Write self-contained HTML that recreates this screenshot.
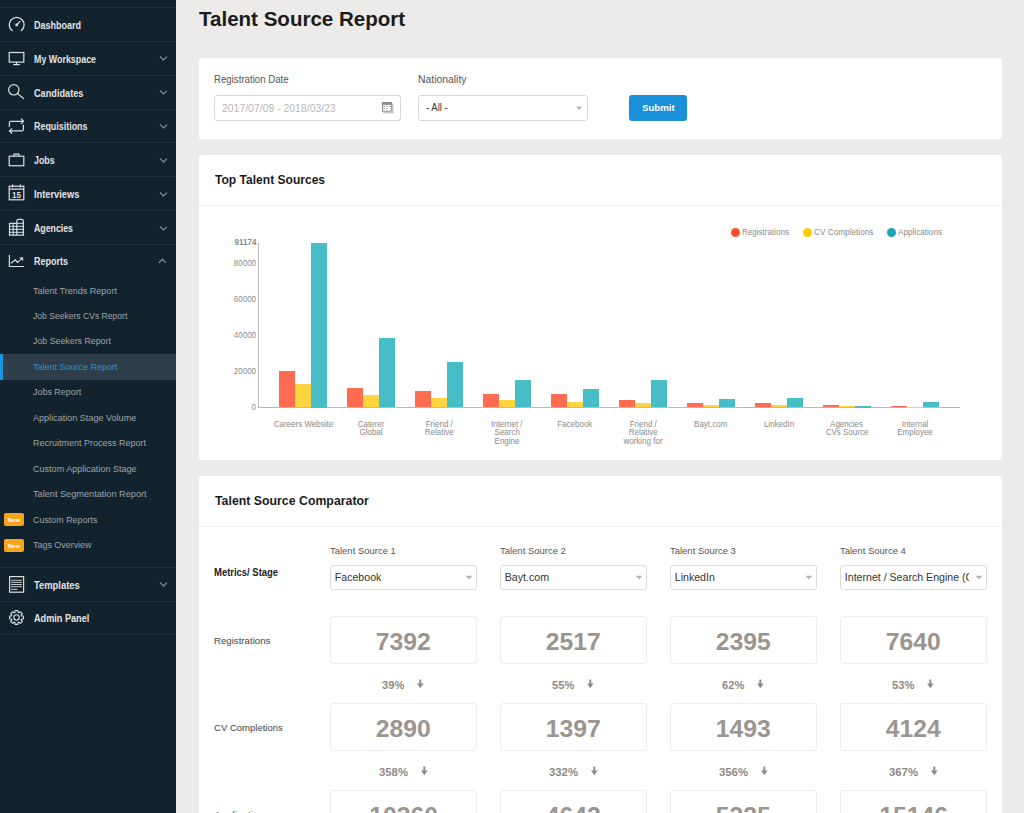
<!DOCTYPE html>
<html><head><meta charset="utf-8"><title>Talent Source Report</title>
<style>
html,body{margin:0;padding:0;}
body{width:1024px;height:813px;overflow:hidden;position:relative;background:#ecebe9;font-family:"Liberation Sans",sans-serif;}
.t{position:absolute;white-space:nowrap;}
.r{position:absolute;}
svg.r{overflow:visible}
</style></head><body>
<div class="r" style="left:0px;top:0px;width:176px;height:813px;background:#12232e"></div>
<div class="r" style="left:0px;top:7px;width:176px;height:1px;background:#21303a"></div>
<div class="r" style="left:0px;top:41px;width:176px;height:1px;background:#21303a"></div>
<div class="r" style="left:0px;top:75px;width:176px;height:1px;background:#21303a"></div>
<div class="r" style="left:0px;top:109px;width:176px;height:1px;background:#21303a"></div>
<div class="r" style="left:0px;top:142px;width:176px;height:1px;background:#21303a"></div>
<div class="r" style="left:0px;top:176px;width:176px;height:1px;background:#21303a"></div>
<div class="r" style="left:0px;top:210px;width:176px;height:1px;background:#21303a"></div>
<div class="r" style="left:0px;top:244px;width:176px;height:1px;background:#21303a"></div>
<div class="r" style="left:0px;top:567px;width:176px;height:1px;background:#21303a"></div>
<div class="r" style="left:0px;top:601px;width:176px;height:1px;background:#21303a"></div>
<div class="r" style="left:0px;top:634px;width:176px;height:1px;background:#21303a"></div>
<div class="t" style="left:33.70px;top:18.79px;font-size:10px;line-height:13px;color:#e2e4e5;font-weight:700;transform:scaleX(0.900);transform-origin:0 0;">Dashboard</div>
<div class="t" style="left:33.70px;top:52.69px;font-size:10px;line-height:13px;color:#e2e4e5;font-weight:700;transform:scaleX(0.888);transform-origin:0 0;">My Workspace</div>
<svg class="r" style="left:159px;top:55.1px" width="9" height="6" viewBox="0 0 9 6"><path d="M0.9 1.3 L4.5 4.9 L7.9 1.6" fill="none" stroke="#8b949b" stroke-width="1.15"/></svg>
<div class="t" style="left:33.70px;top:86.58px;font-size:10px;line-height:13px;color:#e2e4e5;font-weight:700;transform:scaleX(0.917);transform-origin:0 0;">Candidates</div>
<svg class="r" style="left:159px;top:89.0px" width="9" height="6" viewBox="0 0 9 6"><path d="M0.9 1.3 L4.5 4.9 L7.9 1.6" fill="none" stroke="#8b949b" stroke-width="1.15"/></svg>
<div class="t" style="left:33.70px;top:120.48px;font-size:10px;line-height:13px;color:#e2e4e5;font-weight:700;transform:scaleX(0.892);transform-origin:0 0;">Requisitions</div>
<svg class="r" style="left:159px;top:123.0px" width="9" height="6" viewBox="0 0 9 6"><path d="M0.9 1.3 L4.5 4.9 L7.9 1.6" fill="none" stroke="#8b949b" stroke-width="1.15"/></svg>
<div class="t" style="left:33.70px;top:154.39px;font-size:10px;line-height:13px;color:#e2e4e5;font-weight:700;transform:scaleX(0.887);transform-origin:0 0;">Jobs</div>
<svg class="r" style="left:159px;top:156.9px" width="9" height="6" viewBox="0 0 9 6"><path d="M0.9 1.3 L4.5 4.9 L7.9 1.6" fill="none" stroke="#8b949b" stroke-width="1.15"/></svg>
<div class="t" style="left:33.70px;top:188.28px;font-size:10px;line-height:13px;color:#e2e4e5;font-weight:700;transform:scaleX(0.926);transform-origin:0 0;">Interviews</div>
<svg class="r" style="left:159px;top:190.8px" width="9" height="6" viewBox="0 0 9 6"><path d="M0.9 1.3 L4.5 4.9 L7.9 1.6" fill="none" stroke="#8b949b" stroke-width="1.15"/></svg>
<div class="t" style="left:33.70px;top:222.03px;font-size:10px;line-height:13px;color:#e2e4e5;font-weight:700;transform:scaleX(0.877);transform-origin:0 0;">Agencies</div>
<svg class="r" style="left:159px;top:224.5px" width="9" height="6" viewBox="0 0 9 6"><path d="M0.9 1.3 L4.5 4.9 L7.9 1.6" fill="none" stroke="#8b949b" stroke-width="1.15"/></svg>
<div class="t" style="left:33.70px;top:255.39px;font-size:10px;line-height:13px;color:#e2e4e5;font-weight:700;transform:scaleX(0.897);transform-origin:0 0;">Reports</div>
<svg class="r" style="left:158px;top:257.9px" width="9" height="6" viewBox="0 0 9 6"><path d="M0.9 4.9 L4.4 1.4 L7.7 4.7" fill="none" stroke="#8f989e" stroke-width="1.15"/></svg>
<div class="t" style="left:33.70px;top:578.74px;font-size:10px;line-height:13px;color:#e2e4e5;font-weight:700;transform:scaleX(0.938);transform-origin:0 0;">Templates</div>
<svg class="r" style="left:159px;top:581.2px" width="9" height="6" viewBox="0 0 9 6"><path d="M0.9 1.3 L4.5 4.9 L7.9 1.6" fill="none" stroke="#8b949b" stroke-width="1.15"/></svg>
<div class="t" style="left:33.70px;top:612.28px;font-size:10px;line-height:13px;color:#e2e4e5;font-weight:700;transform:scaleX(0.913);transform-origin:0 0;">Admin Panel</div>
<div class="r" style="left:0px;top:354px;width:176px;height:26px;background:#2d3d4a"></div>
<div class="r" style="left:0px;top:354px;width:3px;height:26px;background:#1a96e0"></div>
<div class="t" style="left:33.40px;top:283.54px;font-size:9.7px;line-height:13px;color:#9ea3a6;font-weight:400;transform:scaleX(0.933);transform-origin:0 0;">Talent Trends Report</div>
<div class="t" style="left:33.40px;top:308.99px;font-size:9.7px;line-height:13px;color:#9ea3a6;font-weight:400;transform:scaleX(0.885);transform-origin:0 0;">Job Seekers CVs Report</div>
<div class="t" style="left:33.40px;top:334.44px;font-size:9.7px;line-height:13px;color:#9ea3a6;font-weight:400;transform:scaleX(0.910);transform-origin:0 0;">Job Seekers Report</div>
<div class="t" style="left:33.40px;top:359.89px;font-size:9.7px;line-height:13px;color:#2594d6;font-weight:400;transform:scaleX(0.928);transform-origin:0 0;">Talent Source Report</div>
<div class="t" style="left:33.40px;top:385.34px;font-size:9.7px;line-height:13px;color:#9ea3a6;font-weight:400;transform:scaleX(0.922);transform-origin:0 0;">Jobs Report</div>
<div class="t" style="left:33.40px;top:410.79px;font-size:9.7px;line-height:13px;color:#9ea3a6;font-weight:400;transform:scaleX(0.935);transform-origin:0 0;">Application Stage Volume</div>
<div class="t" style="left:33.40px;top:436.24px;font-size:9.7px;line-height:13px;color:#9ea3a6;font-weight:400;transform:scaleX(0.929);transform-origin:0 0;">Recruitment Process Report</div>
<div class="t" style="left:33.40px;top:461.69px;font-size:9.7px;line-height:13px;color:#9ea3a6;font-weight:400;transform:scaleX(0.934);transform-origin:0 0;">Custom Application Stage</div>
<div class="t" style="left:33.40px;top:487.14px;font-size:9.7px;line-height:13px;color:#9ea3a6;font-weight:400;transform:scaleX(0.946);transform-origin:0 0;">Talent Segmentation Report</div>
<div class="t" style="left:33.40px;top:512.59px;font-size:9.7px;line-height:13px;color:#9ea3a6;font-weight:400;transform:scaleX(0.920);transform-origin:0 0;">Custom Reports</div>
<div class="r" style="left:4px;top:513.3px;width:20px;height:13px;background:#f9a51a;border-radius:2px"></div>
<div class="t" style="left:7.93px;top:516.19px;font-size:5.8px;line-height:8px;color:#fff;font-weight:700;transform:scaleX(1.038);transform-origin:50% 0;">New</div>
<div class="t" style="left:33.40px;top:538.04px;font-size:9.7px;line-height:13px;color:#9ea3a6;font-weight:400;transform:scaleX(0.921);transform-origin:0 0;">Tags Overview</div>
<div class="r" style="left:4px;top:538.7px;width:20px;height:13px;background:#f9a51a;border-radius:2px"></div>
<div class="t" style="left:7.93px;top:541.59px;font-size:5.8px;line-height:8px;color:#fff;font-weight:700;transform:scaleX(1.038);transform-origin:50% 0;">New</div>
<svg class="r" style="left:8px;top:16px" width="18" height="17" viewBox="0 0 18 17"><path d="M4.1 14.6 A7.4 7.4 0 1 1 13.3 14.6" fill="none" stroke="#dcdfe0" stroke-width="1.3" stroke-linecap="round"/><rect x="7.4" y="7.5" width="2.7" height="2.7" rx="0.6" fill="#dcdfe0"/><path d="M9 8.6 L12 5.4" stroke="#dcdfe0" stroke-width="1.2" stroke-linecap="round"/></svg>
<svg class="r" style="left:8px;top:51px" width="17" height="15" viewBox="0 0 17 15"><rect x="1.2" y="1.5" width="14.6" height="9.6" fill="none" stroke="#dcdfe0" stroke-width="1.2"/><path d="M8.5 11 V13.2 M5.2 13.6 H11.8" stroke="#dcdfe0" stroke-width="1.2"/></svg>
<svg class="r" style="left:7px;top:83px" width="18" height="17" viewBox="0 0 18 17"><circle cx="6.8" cy="6.8" r="5.2" fill="none" stroke="#dcdfe0" stroke-width="1.2"/><path d="M10.6 10.6 L16.8 15.8" stroke="#dcdfe0" stroke-width="1.2"/></svg>
<svg class="r" style="left:8px;top:117px" width="17" height="17" viewBox="0 0 17 17"><path d="M1.4 10 V5.8 Q1.4 4.3 2.9 4.3 H15.4 M13 1.7 L15.6 4.3 L13 6.9" fill="none" stroke="#dcdfe0" stroke-width="1.2"/><path d="M15.4 7.8 V12.4 Q15.4 13.9 13.9 13.9 H1.6 M4.1 11.3 L1.5 13.9 L4.1 16.5" fill="none" stroke="#dcdfe0" stroke-width="1.2"/></svg>
<svg class="r" style="left:8px;top:153px" width="17" height="14" viewBox="0 0 17 14"><rect x="1.2" y="3.2" width="14.6" height="9.5" fill="none" stroke="#dcdfe0" stroke-width="1.2"/><path d="M6 3.2 V1.2 H11 V3.2" fill="none" stroke="#dcdfe0" stroke-width="1.2"/></svg>
<svg class="r" style="left:8px;top:184px" width="17" height="17" viewBox="0 0 17 17"><rect x="1.2" y="2.2" width="14.6" height="13.6" fill="none" stroke="#dcdfe0" stroke-width="1.2"/><path d="M1.2 5.2 H15.8 M4.6 0.5 V3.5 M12.4 0.5 V3.5" stroke="#dcdfe0" stroke-width="1.2"/><text x="8.6" y="14.3" font-family="Liberation Sans" font-weight="700" font-size="9" fill="#dcdfe0" text-anchor="middle" transform="translate(8.6 0) scale(0.9 1) translate(-8.6 0)">15</text></svg>
<svg class="r" style="left:8px;top:218px" width="17" height="18" viewBox="0 0 17 18"><path d="M1.5 17.2 V5.4 H8.8 M8.8 17.2 V3.2 Q8.8 1.4 10.6 1.4 H13.6 Q15.4 1.4 15.4 3.2 V17.2 M0.8 17.2 H16.2" fill="none" stroke="#dcdfe0" stroke-width="1.2"/><path d="M1.5 8.3 H15.4 M1.5 11.3 H15.4 M1.5 14.3 H15.4 M8.8 5.3 H15.4 M5.2 5.4 V17" fill="none" stroke="#dcdfe0" stroke-width="1"/></svg>
<svg class="r" style="left:8px;top:254px" width="17" height="14" viewBox="0 0 17 14"><path d="M1.4 0.9 V12.5 H16" fill="none" stroke="#dcdfe0" stroke-width="1.2"/><path d="M2.9 9.2 L7.3 5.8 L9.4 8.4 L13.2 5.2" fill="none" stroke="#dcdfe0" stroke-width="1.1"/><path d="M11.9 3.6 H14.9 V6.6 Z" fill="#dcdfe0" stroke="#dcdfe0" stroke-width="0.5" stroke-linejoin="round"/></svg>
<svg class="r" style="left:8px;top:575px" width="17" height="19" viewBox="0 0 17 19"><rect x="1.6" y="1.6" width="14" height="15.6" fill="none" stroke="#dcdfe0" stroke-width="1.2"/><path d="M3 5.3 H13.9 M3 7.4 H13.9 M3 9.5 H13.9 M3 11.7 H13.9 M3 14.3 H9.4" stroke="#dcdfe0" stroke-width="0.9"/></svg>
<svg class="r" style="left:8px;top:609px" width="17" height="17" viewBox="0 0 17 17"><path d="M15.35 7.04 L15.35 9.96 L13.58 10.02 L13.16 11.02 L14.37 12.31 L12.31 14.37 L11.02 13.16 L10.02 13.58 L9.96 15.35 L7.04 15.35 L6.98 13.58 L5.98 13.16 L4.69 14.37 L2.63 12.31 L3.84 11.02 L3.42 10.02 L1.65 9.96 L1.65 7.04 L3.42 6.98 L3.84 5.98 L2.63 4.69 L4.69 2.63 L5.98 3.84 L6.98 3.42 L7.04 1.65 L9.96 1.65 L10.02 3.42 L11.02 3.84 L12.31 2.63 L14.37 4.69 L13.16 5.98 L13.58 6.98 Z" fill="none" stroke="#dcdfe0" stroke-width="1.1" stroke-linejoin="round"/><circle cx="8.5" cy="8.5" r="2.7" fill="none" stroke="#dcdfe0" stroke-width="1.1"/></svg>
<div class="t" style="left:199.30px;top:5.22px;font-size:21px;line-height:27px;color:#1b1b1b;font-weight:700;transform:scaleX(0.978);transform-origin:0 0;">Talent Source Report</div>
<div class="r" style="left:199px;top:58px;width:803px;height:81px;background:#fff;border-radius:2px"></div>
<div class="t" style="left:214.20px;top:73.03px;font-size:10px;line-height:13px;color:#555;font-weight:400;transform:scaleX(0.966);transform-origin:0 0;">Registration Date</div>
<div class="t" style="left:418.20px;top:73.03px;font-size:10px;line-height:13px;color:#555;font-weight:400;transform:scaleX(1.039);transform-origin:0 0;">Nationality</div>
<div class="r" style="left:214px;top:95px;width:187px;height:26px;border:1px solid #d9d7d4;border-radius:3px;box-sizing:border-box;background:#fff"></div>
<div class="t" style="left:222.40px;top:101.36px;font-size:10.5px;line-height:14px;color:#b8b8b8;font-weight:400;transform:scaleX(0.994);transform-origin:0 0;">2017/07/09 - 2018/03/23</div>
<svg class="r" style="left:381px;top:101px" width="14" height="13" viewBox="0 0 14 13"><rect x="1.6" y="1.6" width="8.7" height="8.6" fill="#fff" stroke="#8f8b86" stroke-width="1"/><path d="M1.1 1.1 H10.8 V3.9 H1.1 Z" fill="#8f8b86"/><path d="M2.6 5.5 H4 M5.4 5.5 H6.8 M8.2 5.5 H9.6 M2.6 7.6 H4 M5.4 7.6 H6.8" stroke="#8f8b86" stroke-width="1"/><path d="M11.8 2.7 V11.8 M2.2 11.8 H12.2" stroke="#aeaba7" stroke-width="1"/></svg>
<div class="r" style="left:418px;top:95px;width:170px;height:26px;border:1px solid #d9d7d4;border-radius:3px;box-sizing:border-box;background:#fff"></div>
<div class="t" style="left:426.20px;top:101.20px;font-size:10.4px;line-height:14px;color:#333;font-weight:400;transform:scaleX(0.919);transform-origin:0 0;">- All -</div>
<svg class="r" style="left:576px;top:106px" width="6" height="5" viewBox="0 0 6 5"><path d="M0 0.5 H6 L3 4 Z" fill="#b5b5b5"/></svg>
<div class="r" style="left:629px;top:95px;width:58px;height:26px;background:#1a90da;border-radius:3px"></div>
<div class="t" style="left:641.80px;top:102.37px;font-size:9.6px;line-height:12px;color:#fff;font-weight:700;transform:scaleX(1.008);transform-origin:0 0;">Submit</div>
<div class="r" style="left:199px;top:155px;width:803px;height:305px;background:#fff;border-radius:2px"></div>
<div class="r" style="left:199px;top:205px;width:803px;height:1px;background:#efefef"></div>
<div class="t" style="left:214.60px;top:171.77px;font-size:12.2px;line-height:16px;color:#1b1b1b;font-weight:700;transform:scaleX(0.989);transform-origin:0 0;">Top Talent Sources</div>
<div class="r" style="left:730.8px;top:227.5px;width:9px;height:9px;border-radius:50%;background:#ff4e2f"></div>
<div class="t" style="left:741.80px;top:227.15px;font-size:8.5px;line-height:11px;color:#8a8a8a;font-weight:400;transform:scaleX(0.948);transform-origin:0 0;">Registrations</div>
<div class="r" style="left:803.3px;top:227.5px;width:9px;height:9px;border-radius:50%;background:#ffcc00"></div>
<div class="t" style="left:813.60px;top:227.15px;font-size:8.5px;line-height:11px;color:#8a8a8a;font-weight:400;transform:scaleX(0.967);transform-origin:0 0;">CV Completions</div>
<div class="r" style="left:886.8px;top:227.5px;width:9px;height:9px;border-radius:50%;background:#1aa6b7"></div>
<div class="t" style="left:897.50px;top:227.15px;font-size:8.5px;line-height:11px;color:#8a8a8a;font-weight:400;transform:scaleX(0.960);transform-origin:0 0;">Applications</div>
<div class="r" style="left:258px;top:243px;width:1px;height:165px;background:#bfbab5"></div>
<div class="r" style="left:258px;top:407px;width:702px;height:1px;background:#bfbab5"></div>
<div class="t" style="left:232.57px;top:237.32px;font-size:8.6px;line-height:11px;color:#888;font-weight:700;transform:scaleX(0.939);transform-origin:100% 0;">91174</div>
<div class="t" style="left:230.98px;top:257.04px;font-size:9px;line-height:12px;color:#8c8c8c;font-weight:400;transform:scaleX(0.889);transform-origin:100% 0;">80000</div>
<div class="t" style="left:230.98px;top:293.13px;font-size:9px;line-height:12px;color:#8c8c8c;font-weight:400;transform:scaleX(0.889);transform-origin:100% 0;">60000</div>
<div class="t" style="left:230.98px;top:329.21px;font-size:9px;line-height:12px;color:#8c8c8c;font-weight:400;transform:scaleX(0.889);transform-origin:100% 0;">40000</div>
<div class="t" style="left:230.98px;top:365.30px;font-size:9px;line-height:12px;color:#8c8c8c;font-weight:400;transform:scaleX(0.889);transform-origin:100% 0;">20000</div>
<div class="t" style="left:251.00px;top:401.38px;font-size:9px;line-height:12px;color:#8c8c8c;font-weight:400;transform:scaleX(0.889);transform-origin:100% 0;">0</div>
<div class="r" style="left:279px;top:370.69px;width:16px;height:36.81px;background:#ff6c52"></div>
<div class="r" style="left:295px;top:383.68px;width:16px;height:23.82px;background:#fed43f"></div>
<div class="r" style="left:311px;top:243.00px;width:16px;height:164.50px;background:#47bdc7"></div>
<div class="t" style="left:269.57px;top:417.68px;font-size:9px;line-height:12px;color:#8a8a8a;font-weight:400;transform:scaleX(0.889);transform-origin:50% 0;">Careers Website</div>
<div class="r" style="left:347px;top:388.01px;width:16px;height:19.49px;background:#ff6c52"></div>
<div class="r" style="left:363px;top:395.23px;width:16px;height:12.27px;background:#fed43f"></div>
<div class="r" style="left:379px;top:338.04px;width:16px;height:69.46px;background:#47bdc7"></div>
<div class="t" style="left:355.99px;top:417.68px;font-size:9px;line-height:12px;color:#8a8a8a;font-weight:400;transform:scaleX(0.889);transform-origin:50% 0;">Caterer</div>
<div class="t" style="left:358.00px;top:426.18px;font-size:9px;line-height:12px;color:#8a8a8a;font-weight:400;transform:scaleX(0.889);transform-origin:50% 0;">Global</div>
<div class="r" style="left:415px;top:391.26px;width:16px;height:16.24px;background:#ff6c52"></div>
<div class="r" style="left:431px;top:397.58px;width:16px;height:9.92px;background:#fed43f"></div>
<div class="r" style="left:447px;top:362.03px;width:16px;height:45.47px;background:#47bdc7"></div>
<div class="t" style="left:423.75px;top:417.68px;font-size:9px;line-height:12px;color:#8a8a8a;font-weight:400;transform:scaleX(0.889);transform-origin:50% 0;">Friend /</div>
<div class="t" style="left:422.73px;top:426.18px;font-size:9px;line-height:12px;color:#8a8a8a;font-weight:400;transform:scaleX(0.889);transform-origin:50% 0;">Relative</div>
<div class="r" style="left:483px;top:393.72px;width:16px;height:13.78px;background:#ff6c52"></div>
<div class="r" style="left:499px;top:400.06px;width:16px;height:7.44px;background:#fed43f"></div>
<div class="r" style="left:515px;top:380.17px;width:16px;height:27.33px;background:#47bdc7"></div>
<div class="t" style="left:489.23px;top:417.68px;font-size:9px;line-height:12px;color:#8a8a8a;font-weight:400;transform:scaleX(0.889);transform-origin:50% 0;">Internet /</div>
<div class="t" style="left:492.74px;top:426.18px;font-size:9px;line-height:12px;color:#8a8a8a;font-weight:400;transform:scaleX(0.889);transform-origin:50% 0;">Search</div>
<div class="t" style="left:492.98px;top:434.68px;font-size:9px;line-height:12px;color:#8a8a8a;font-weight:400;transform:scaleX(0.889);transform-origin:50% 0;">Engine</div>
<div class="r" style="left:551px;top:394.16px;width:16px;height:13.34px;background:#ff6c52"></div>
<div class="r" style="left:567px;top:402.29px;width:16px;height:5.21px;background:#fed43f"></div>
<div class="r" style="left:583px;top:388.81px;width:16px;height:18.69px;background:#47bdc7"></div>
<div class="t" style="left:555.23px;top:417.68px;font-size:9px;line-height:12px;color:#8a8a8a;font-weight:400;transform:scaleX(0.889);transform-origin:50% 0;">Facebook</div>
<div class="r" style="left:619px;top:400.01px;width:16px;height:7.49px;background:#ff6c52"></div>
<div class="r" style="left:635px;top:402.72px;width:16px;height:4.78px;background:#fed43f"></div>
<div class="r" style="left:651px;top:379.71px;width:16px;height:27.79px;background:#47bdc7"></div>
<div class="t" style="left:627.75px;top:417.68px;font-size:9px;line-height:12px;color:#8a8a8a;font-weight:400;transform:scaleX(0.889);transform-origin:50% 0;">Friend /</div>
<div class="t" style="left:626.73px;top:426.18px;font-size:9px;line-height:12px;color:#8a8a8a;font-weight:400;transform:scaleX(0.889);transform-origin:50% 0;">Relative</div>
<div class="t" style="left:621.02px;top:434.68px;font-size:9px;line-height:12px;color:#8a8a8a;font-weight:400;transform:scaleX(0.889);transform-origin:50% 0;">working for</div>
<div class="r" style="left:687px;top:402.96px;width:16px;height:4.54px;background:#ff6c52"></div>
<div class="r" style="left:703px;top:404.98px;width:16px;height:2.52px;background:#fed43f"></div>
<div class="r" style="left:719px;top:399.12px;width:16px;height:8.38px;background:#47bdc7"></div>
<div class="t" style="left:692.24px;top:417.68px;font-size:9px;line-height:12px;color:#8a8a8a;font-weight:400;transform:scaleX(0.889);transform-origin:50% 0;">Bayt.com</div>
<div class="r" style="left:755px;top:403.18px;width:16px;height:4.32px;background:#ff6c52"></div>
<div class="r" style="left:771px;top:404.81px;width:16px;height:2.69px;background:#fed43f"></div>
<div class="r" style="left:787px;top:397.89px;width:16px;height:9.61px;background:#47bdc7"></div>
<div class="t" style="left:761.99px;top:417.68px;font-size:9px;line-height:12px;color:#8a8a8a;font-weight:400;transform:scaleX(0.889);transform-origin:50% 0;">LinkedIn</div>
<div class="r" style="left:823px;top:405.43px;width:16px;height:2.07px;background:#ff6c52"></div>
<div class="r" style="left:839px;top:405.70px;width:16px;height:1.80px;background:#fed43f"></div>
<div class="r" style="left:855px;top:406.00px;width:16px;height:1.50px;background:#47bdc7"></div>
<div class="t" style="left:828.48px;top:417.68px;font-size:9px;line-height:12px;color:#8a8a8a;font-weight:400;transform:scaleX(0.889);transform-origin:50% 0;">Agencies</div>
<div class="t" style="left:822.99px;top:426.18px;font-size:9px;line-height:12px;color:#8a8a8a;font-weight:400;transform:scaleX(0.889);transform-origin:50% 0;">CVs Source</div>
<div class="r" style="left:891px;top:405.70px;width:16px;height:1.80px;background:#ff6c52"></div>
<div class="r" style="left:907px;top:406.60px;width:16px;height:0.90px;background:#fed43f"></div>
<div class="r" style="left:923px;top:402.45px;width:16px;height:5.05px;background:#47bdc7"></div>
<div class="t" style="left:899.99px;top:417.68px;font-size:9px;line-height:12px;color:#8a8a8a;font-weight:400;transform:scaleX(0.889);transform-origin:50% 0;">Internal</div>
<div class="t" style="left:895.00px;top:426.18px;font-size:9px;line-height:12px;color:#8a8a8a;font-weight:400;transform:scaleX(0.889);transform-origin:50% 0;">Employee</div>
<div class="r" style="left:199px;top:476px;width:803px;height:400px;background:#fff;border-radius:2px"></div>
<div class="r" style="left:199px;top:526px;width:803px;height:1px;background:#efefef"></div>
<div class="t" style="left:214.50px;top:493.17px;font-size:12.2px;line-height:16px;color:#1b1b1b;font-weight:700;transform:scaleX(1.011);transform-origin:0 0;">Talent Source Comparator</div>
<div class="t" style="left:214.30px;top:566.37px;font-size:10.2px;line-height:13px;color:#222;font-weight:700;transform:scaleX(0.928);transform-origin:0 0;">Metrics/ Stage</div>
<div class="t" style="left:330.40px;top:544.37px;font-size:9.9px;line-height:13px;color:#555;font-weight:400;transform:scaleX(0.959);transform-origin:0 0;">Talent Source 1</div>
<div class="r" style="left:330px;top:565px;width:147px;height:25px;border:1px solid #dedcd9;border-radius:3px;box-sizing:border-box;background:#fff;overflow:hidden"></div>
<div class="r" style="left:331px;top:566px;width:130px;height:23px;overflow:hidden"><div class="t" style="left:3.8px;top:3.18px;font-size:10.6px;line-height:17px;color:#333">Facebook</div></div>
<svg class="r" style="left:465px;top:575px" width="8" height="5" viewBox="0 0 8 5"><path d="M0.5 0.8 H7.5 L4 4.4 Z" fill="#b5b5b5"/></svg>
<div class="t" style="left:500.40px;top:544.37px;font-size:9.9px;line-height:13px;color:#555;font-weight:400;transform:scaleX(0.959);transform-origin:0 0;">Talent Source 2</div>
<div class="r" style="left:500px;top:565px;width:147px;height:25px;border:1px solid #dedcd9;border-radius:3px;box-sizing:border-box;background:#fff;overflow:hidden"></div>
<div class="r" style="left:501px;top:566px;width:130px;height:23px;overflow:hidden"><div class="t" style="left:3.8px;top:3.18px;font-size:10.6px;line-height:17px;color:#333">Bayt.com</div></div>
<svg class="r" style="left:635px;top:575px" width="8" height="5" viewBox="0 0 8 5"><path d="M0.5 0.8 H7.5 L4 4.4 Z" fill="#b5b5b5"/></svg>
<div class="t" style="left:670.40px;top:544.37px;font-size:9.9px;line-height:13px;color:#555;font-weight:400;transform:scaleX(0.959);transform-origin:0 0;">Talent Source 3</div>
<div class="r" style="left:670px;top:565px;width:147px;height:25px;border:1px solid #dedcd9;border-radius:3px;box-sizing:border-box;background:#fff;overflow:hidden"></div>
<div class="r" style="left:671px;top:566px;width:130px;height:23px;overflow:hidden"><div class="t" style="left:3.8px;top:3.18px;font-size:10.6px;line-height:17px;color:#333">LinkedIn</div></div>
<svg class="r" style="left:805px;top:575px" width="8" height="5" viewBox="0 0 8 5"><path d="M0.5 0.8 H7.5 L4 4.4 Z" fill="#b5b5b5"/></svg>
<div class="t" style="left:840.40px;top:544.37px;font-size:9.9px;line-height:13px;color:#555;font-weight:400;transform:scaleX(0.959);transform-origin:0 0;">Talent Source 4</div>
<div class="r" style="left:840px;top:565px;width:147px;height:25px;border:1px solid #dedcd9;border-radius:3px;box-sizing:border-box;background:#fff;overflow:hidden"></div>
<div class="r" style="left:841px;top:566px;width:128px;height:23px;overflow:hidden"><div class="t" style="left:3.8px;top:3.18px;font-size:10.6px;line-height:17px;color:#333">Internet / Search Engine (Google)</div></div>
<svg class="r" style="left:975px;top:575px" width="8" height="5" viewBox="0 0 8 5"><path d="M0.5 0.8 H7.5 L4 4.4 Z" fill="#b5b5b5"/></svg>
<div class="t" style="left:214.30px;top:633.77px;font-size:9.9px;line-height:13px;color:#444;font-weight:400;transform:scaleX(0.978);transform-origin:0 0;">Registrations</div>
<div class="r" style="left:330px;top:616px;width:147px;height:48px;border:1px solid #eeedeb;border-radius:3px;box-sizing:border-box"></div>
<div class="t" style="left:377.36px;top:626.96px;font-size:23.5px;line-height:31px;color:#9b958f;font-weight:700;transform:scaleX(1.052);transform-origin:50% 0;">7392</div>
<div class="t" style="left:382.40px;top:679.13px;font-size:10.3px;line-height:13px;color:#8f8a85;font-weight:700;transform:scaleX(1.083);transform-origin:0 0;">39%</div>
<svg class="r" style="left:417.2px;top:678.5px" width="7" height="10" viewBox="0 0 7 10"><path d="M3.3 0.5 V6" stroke="#8f8a85" stroke-width="1.9"/><path d="M0 4.6 H6.6 L3.3 9.2 Z" fill="#8f8a85"/></svg>
<div class="r" style="left:500px;top:616px;width:147px;height:48px;border:1px solid #eeedeb;border-radius:3px;box-sizing:border-box"></div>
<div class="t" style="left:547.36px;top:626.96px;font-size:23.5px;line-height:31px;color:#9b958f;font-weight:700;transform:scaleX(1.052);transform-origin:50% 0;">2517</div>
<div class="t" style="left:552.40px;top:679.13px;font-size:10.3px;line-height:13px;color:#8f8a85;font-weight:700;transform:scaleX(1.083);transform-origin:0 0;">55%</div>
<svg class="r" style="left:587.2px;top:678.5px" width="7" height="10" viewBox="0 0 7 10"><path d="M3.3 0.5 V6" stroke="#8f8a85" stroke-width="1.9"/><path d="M0 4.6 H6.6 L3.3 9.2 Z" fill="#8f8a85"/></svg>
<div class="r" style="left:670px;top:616px;width:147px;height:48px;border:1px solid #eeedeb;border-radius:3px;box-sizing:border-box"></div>
<div class="t" style="left:717.36px;top:626.96px;font-size:23.5px;line-height:31px;color:#9b958f;font-weight:700;transform:scaleX(1.052);transform-origin:50% 0;">2395</div>
<div class="t" style="left:722.40px;top:679.13px;font-size:10.3px;line-height:13px;color:#8f8a85;font-weight:700;transform:scaleX(1.083);transform-origin:0 0;">62%</div>
<svg class="r" style="left:757.2px;top:678.5px" width="7" height="10" viewBox="0 0 7 10"><path d="M3.3 0.5 V6" stroke="#8f8a85" stroke-width="1.9"/><path d="M0 4.6 H6.6 L3.3 9.2 Z" fill="#8f8a85"/></svg>
<div class="r" style="left:840px;top:616px;width:147px;height:48px;border:1px solid #eeedeb;border-radius:3px;box-sizing:border-box"></div>
<div class="t" style="left:887.36px;top:626.96px;font-size:23.5px;line-height:31px;color:#9b958f;font-weight:700;transform:scaleX(1.052);transform-origin:50% 0;">7640</div>
<div class="t" style="left:892.40px;top:679.13px;font-size:10.3px;line-height:13px;color:#8f8a85;font-weight:700;transform:scaleX(1.083);transform-origin:0 0;">53%</div>
<svg class="r" style="left:927.2px;top:678.5px" width="7" height="10" viewBox="0 0 7 10"><path d="M3.3 0.5 V6" stroke="#8f8a85" stroke-width="1.9"/><path d="M0 4.6 H6.6 L3.3 9.2 Z" fill="#8f8a85"/></svg>
<div class="t" style="left:214.30px;top:720.77px;font-size:9.9px;line-height:13px;color:#444;font-weight:400;transform:scaleX(0.965);transform-origin:0 0;">CV Completions</div>
<div class="r" style="left:330px;top:703px;width:147px;height:48px;border:1px solid #eeedeb;border-radius:3px;box-sizing:border-box"></div>
<div class="t" style="left:377.36px;top:713.96px;font-size:23.5px;line-height:31px;color:#9b958f;font-weight:700;transform:scaleX(1.052);transform-origin:50% 0;">2890</div>
<div class="t" style="left:379.05px;top:766.13px;font-size:10.3px;line-height:13px;color:#8f8a85;font-weight:700;transform:scaleX(1.100);transform-origin:0 0;">358%</div>
<svg class="r" style="left:420.6px;top:765.5px" width="7" height="10" viewBox="0 0 7 10"><path d="M3.3 0.5 V6" stroke="#8f8a85" stroke-width="1.9"/><path d="M0 4.6 H6.6 L3.3 9.2 Z" fill="#8f8a85"/></svg>
<div class="r" style="left:500px;top:703px;width:147px;height:48px;border:1px solid #eeedeb;border-radius:3px;box-sizing:border-box"></div>
<div class="t" style="left:547.36px;top:713.96px;font-size:23.5px;line-height:31px;color:#9b958f;font-weight:700;transform:scaleX(1.052);transform-origin:50% 0;">1397</div>
<div class="t" style="left:549.05px;top:766.13px;font-size:10.3px;line-height:13px;color:#8f8a85;font-weight:700;transform:scaleX(1.100);transform-origin:0 0;">332%</div>
<svg class="r" style="left:590.5px;top:765.5px" width="7" height="10" viewBox="0 0 7 10"><path d="M3.3 0.5 V6" stroke="#8f8a85" stroke-width="1.9"/><path d="M0 4.6 H6.6 L3.3 9.2 Z" fill="#8f8a85"/></svg>
<div class="r" style="left:670px;top:703px;width:147px;height:48px;border:1px solid #eeedeb;border-radius:3px;box-sizing:border-box"></div>
<div class="t" style="left:717.36px;top:713.96px;font-size:23.5px;line-height:31px;color:#9b958f;font-weight:700;transform:scaleX(1.052);transform-origin:50% 0;">1493</div>
<div class="t" style="left:719.05px;top:766.13px;font-size:10.3px;line-height:13px;color:#8f8a85;font-weight:700;transform:scaleX(1.100);transform-origin:0 0;">356%</div>
<svg class="r" style="left:760.5px;top:765.5px" width="7" height="10" viewBox="0 0 7 10"><path d="M3.3 0.5 V6" stroke="#8f8a85" stroke-width="1.9"/><path d="M0 4.6 H6.6 L3.3 9.2 Z" fill="#8f8a85"/></svg>
<div class="r" style="left:840px;top:703px;width:147px;height:48px;border:1px solid #eeedeb;border-radius:3px;box-sizing:border-box"></div>
<div class="t" style="left:887.36px;top:713.96px;font-size:23.5px;line-height:31px;color:#9b958f;font-weight:700;transform:scaleX(1.052);transform-origin:50% 0;">4124</div>
<div class="t" style="left:889.05px;top:766.13px;font-size:10.3px;line-height:13px;color:#8f8a85;font-weight:700;transform:scaleX(1.100);transform-origin:0 0;">367%</div>
<svg class="r" style="left:930.5px;top:765.5px" width="7" height="10" viewBox="0 0 7 10"><path d="M3.3 0.5 V6" stroke="#8f8a85" stroke-width="1.9"/><path d="M0 4.6 H6.6 L3.3 9.2 Z" fill="#8f8a85"/></svg>
<div class="t" style="left:214.30px;top:807.77px;font-size:9.9px;line-height:13px;color:#444;font-weight:400;transform:scaleX(1.049);transform-origin:0 0;">Applications</div>
<div class="r" style="left:330px;top:790px;width:147px;height:48px;border:1px solid #eeedeb;border-radius:3px;box-sizing:border-box"></div>
<div class="t" style="left:370.83px;top:800.96px;font-size:23.5px;line-height:31px;color:#9b958f;font-weight:700;transform:scaleX(1.052);transform-origin:50% 0;">10360</div>
<div class="r" style="left:500px;top:790px;width:147px;height:48px;border:1px solid #eeedeb;border-radius:3px;box-sizing:border-box"></div>
<div class="t" style="left:547.36px;top:800.96px;font-size:23.5px;line-height:31px;color:#9b958f;font-weight:700;transform:scaleX(1.052);transform-origin:50% 0;">4642</div>
<div class="r" style="left:670px;top:790px;width:147px;height:48px;border:1px solid #eeedeb;border-radius:3px;box-sizing:border-box"></div>
<div class="t" style="left:717.36px;top:800.96px;font-size:23.5px;line-height:31px;color:#9b958f;font-weight:700;transform:scaleX(1.052);transform-origin:50% 0;">5325</div>
<div class="r" style="left:840px;top:790px;width:147px;height:48px;border:1px solid #eeedeb;border-radius:3px;box-sizing:border-box"></div>
<div class="t" style="left:880.83px;top:800.96px;font-size:23.5px;line-height:31px;color:#9b958f;font-weight:700;transform:scaleX(1.052);transform-origin:50% 0;">15146</div>
</body></html>
